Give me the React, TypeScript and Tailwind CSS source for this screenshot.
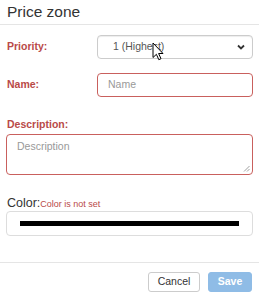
import React from "react";

const LABEL = "text-[10.5px] font-bold text-[#b94a48]";

function Cursor() {
  return (
    <svg
      className="pointer-events-none absolute left-[152px] top-[42px]"
      width="12"
      height="19"
      viewBox="0 0 12 19"
    >
      <path
        d="M1 1v14.5l3.4-3.2 2.4 5.4 2.2-1-2.4-5.2H11z"
        fill="#fff"
        stroke="#000"
        strokeWidth="1"
        strokeLinejoin="round"
      />
    </svg>
  );
}

export default function App() {
  return (
    <div className="relative h-[300px] w-[259px] bg-white font-['Liberation_Sans',Arial,sans-serif] text-[#333]">
      <div className="flex h-[25px] items-center border-b border-[#e5e5e5] px-[7px]">
        <h1 className="text-[15.5px] leading-none text-[#333]">Price zone</h1>
      </div>

      <div className="px-[6px] pt-[10px]">
        <div className="flex h-[24px] items-center">
          <label className={`${LABEL} w-[91px] pl-[1px]`}>Priority:</label>
          <div className="flex h-[24px] flex-1 items-center justify-between rounded-[4px] border border-[#ccc] pl-[15px] pr-[6px] text-[10.5px] text-[#555] shadow-[inset_0_1px_1px_rgba(0,0,0,0.075)]">
            <span>1 (Highest)</span>
            <svg width="10" height="8" viewBox="0 0 10 8">
              <path d="M2 2.5l3 3 3-3" fill="none" stroke="#333" strokeWidth="1.8" />
            </svg>
          </div>
        </div>

        <div className="mt-[14px] flex h-[24px] items-center">
          <label className={`${LABEL} w-[91px] pl-[1px]`}>Name:</label>
          <div className="flex h-[24px] flex-1 items-center rounded-[4px] border border-[#c9605d] pl-[10px] text-[10.5px] text-[#999]">
            Name
          </div>
        </div>

        <div className={`${LABEL} mt-[20px] pl-[1px] leading-[14px]`}>Description:</div>
        <div className="relative mt-[3px] h-[41px] rounded-[4px] border border-[#c9605d] pl-[10px] pt-[4px] text-[10.5px] text-[#999]">
          Description
          <svg className="absolute bottom-[2px] right-[2px]" width="7" height="7" viewBox="0 0 7 7">
            <path d="M1 6.5L6.5 1M4 6.5L6.5 4" stroke="#888" strokeWidth="0.8" />
          </svg>
        </div>

        <div className="mt-[21px] flex items-baseline pl-[1px] leading-[14px]">
          <span className="text-[12.5px] text-[#333]">Color:</span>
          <span className="text-[9px] text-[#b94a48]">Color is not set</span>
        </div>
        <div className="mt-[0px] flex h-[25px] items-center rounded-[4px] border border-[#ddd] px-[13px]">
          <div className="h-[5px] flex-1 bg-black" />
        </div>
      </div>

      <div className="mt-[26px] flex justify-end gap-[8px] border-t border-[#e5e5e5] px-[7px] pt-[9px]">
        <button className="h-[20px] w-[52px] rounded-[3px] border border-[#ccc] bg-white text-[10.5px] text-[#333]">
          Cancel
        </button>
        <button className="h-[20px] w-[44px] rounded-[3px] border border-[#8fbce6] bg-[#8fbce6] text-[10.5px] font-bold text-white">
          Save
        </button>
      </div>

      <Cursor />
    </div>
  );
}
